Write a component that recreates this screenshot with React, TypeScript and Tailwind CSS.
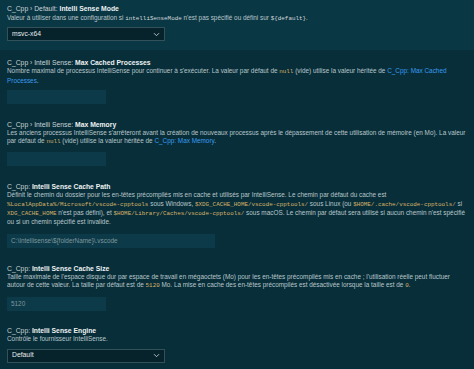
import React from 'react';

const Code: React.FC<{ children: React.ReactNode; tone?: 'light' | 'warm' }> = ({ children, tone = 'warm' }) => (
  <code className={`font-['Liberation_Mono',monospace] text-[5.9px] ${tone === 'warm' ? 'text-[#d9b36a]' : 'text-[#d4d9db]'}`}>
    {children}
  </code>
);

const Link: React.FC<{ children: React.ReactNode }> = ({ children }) => (
  <span className="text-[#3b9cf0]">{children}</span>
);

const Chevron = () => (
  <svg width="7" height="5" viewBox="0 0 7 5" fill="none" className="text-[#c5cdd0]">
    <path d="M1 1.2 3.5 3.7 6 1.2" stroke="currentColor" strokeWidth="0.9" />
  </svg>
);

const Title: React.FC<{ cat: string; name: string }> = ({ cat, name }) => (
  <div className="text-[6.8px] leading-[9px] whitespace-nowrap">
    <span className="text-[#c9d2d5]">{cat}</span>
    <span className="font-bold text-[#eef2f3]">{name}</span>
  </div>
);

const Select: React.FC<{ value: string }> = ({ value }) => (
  <div className="flex items-center justify-between w-[158px] h-[14px] px-[4px] bg-[#06222b] border border-[#33515a] text-[6.8px] text-[#e6ecee]">
    <span>{value}</span>
    <Chevron />
  </div>
);

const Input: React.FC<{ value?: string; wide?: boolean }> = ({ value, wide }) => (
  <div className={`flex items-center h-[14px] px-[4px] bg-[#0c3a48] text-[6.4px] text-[#7f979e] ${wide ? 'w-[208px]' : 'w-[99px]'}`}>
    {value}
  </div>
);

export default function App() {
  return (
    <div className="w-[474px] h-[369px] overflow-hidden bg-[#072e39] font-['Liberation_Sans',sans-serif] text-[6.4px] leading-[8.3px] text-[#b9c6ca]">
      <div className="bg-[#0a3744] px-[7px] pt-[4px] pb-[9px]">
        <Title cat="C_Cpp › Default: " name="Intelli Sense Mode" />
        <div className="mt-[1px] whitespace-nowrap">
          Valeur à utiliser dans une configuration si <Code tone="light">intelliSenseMode</Code> n'est pas spécifié ou défini sur <Code tone="light">${'{default}'}</Code>.
        </div>
        <div className="mt-[4px]">
          <Select value="msvc-x64" />
        </div>
      </div>

      <div className="px-[7px] pt-[8px] pb-[9px]">
        <Title cat="C_Cpp › Intelli Sense: " name="Max Cached Processes" />
        <div className="whitespace-nowrap">
          Nombre maximal de processus IntelliSense pour continuer à s'exécuter. La valeur par défaut de <Code>null</Code> (vide) utilise la valeur héritée de <Link>C_Cpp: Max Cached</Link>
          <br />
          <Link>Processes</Link>.
        </div>
        <div className="mt-[5px]">
          <Input />
        </div>
      </div>

      <div className="px-[7px] pt-[7px] pb-[9px]">
        <Title cat="C_Cpp › Intelli Sense: " name="Max Memory" />
        <div className="whitespace-nowrap">
          Les anciens processus IntelliSense s'arrêteront avant la création de nouveaux processus après le dépassement de cette utilisation de mémoire (en Mo). La valeur
          <br />
          par défaut de <Code>null</Code> (vide) utilise la valeur héritée de <Link>C_Cpp: Max Memory</Link>.
        </div>
        <div className="mt-[6px]">
          <Input />
        </div>
      </div>

      <div className="px-[7px] pt-[7px] pb-[9px]">
        <Title cat="C_Cpp: " name="Intelli Sense Cache Path" />
        <div className="whitespace-nowrap">
          Définit le chemin du dossier pour les en-têtes précompilés mis en cache et utilisés par IntelliSense. Le chemin par défaut du cache est
          <br />
          <Code>%LocalAppData%/Microsoft/vscode-cpptools</Code> sous Windows, <Code>$XDG_CACHE_HOME/vscode-cpptools/</Code> sous Linux (ou <Code>$HOME/.cache/vscode-cpptools/</Code> si
          <br />
          <Code>XDG_CACHE_HOME</Code> n'est pas défini), et <Code>$HOME/Library/Caches/vscode-cpptools/</Code> sous macOS. Le chemin par défaut sera utilisé si aucun chemin n'est spécifié
          <br />
          ou si un chemin spécifié est invalide.
        </div>
        <div className="mt-[7px]">
          <Input wide value="C:\Intellisense\${folderName}\.vscode" />
        </div>
      </div>

      <div className="px-[7px] pt-[7px] pb-[8px]">
        <Title cat="C_Cpp: " name="Intelli Sense Cache Size" />
        <div className="whitespace-nowrap">
          Taille maximale de l'espace disque dur par espace de travail en mégaoctets (Mo) pour les en-têtes précompilés mis en cache ; l'utilisation réelle peut fluctuer
          <br />
          autour de cette valeur. La taille par défaut est de <Code>5120</Code> Mo. La mise en cache des en-têtes précompilés est désactivée lorsque la taille est de <Code>0</Code>.
        </div>
        <div className="mt-[7px]">
          <Input value="5120" />
        </div>
      </div>

      <div className="px-[7px] pt-[7px] pb-[9px]">
        <Title cat="C_Cpp: " name="Intelli Sense Engine" />
        <div className="whitespace-nowrap">Contrôle le fournisseur IntelliSense.</div>
        <div className="mt-[5px]">
          <Select value="Default" />
        </div>
      </div>
    </div>
  );
}
